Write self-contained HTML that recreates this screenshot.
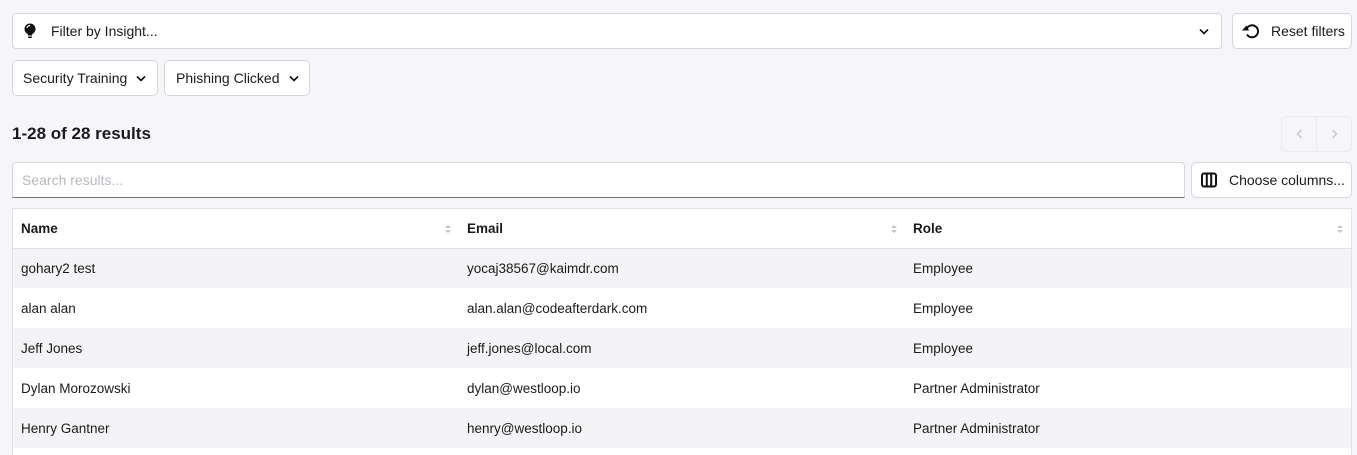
<!DOCTYPE html>
<html><head><meta charset="utf-8"><style>
*{box-sizing:border-box;margin:0;padding:0}
html,body{width:1357px;height:455px;overflow:hidden}
body{background:#f6f6fa;font-family:"Liberation Sans",sans-serif;font-size:14px;color:#1a1a1a;position:relative}
.abs{position:absolute}
.box{background:#fff;border:1px solid #d6d6db;border-radius:4px}
.btn{background:#fff;border:1px solid #d6d6db;border-radius:5px;display:flex;align-items:center}
table{border-collapse:collapse;width:100%}
td,th{height:40px;padding:0 8px;text-align:left;font-size:13.5px}
th{font-weight:bold;position:relative;height:39px}
tbody tr td{background:#fff}
tbody tr:nth-child(odd) td{background:#f4f4f7}
thead tr{border-bottom:1px solid #e2e2e6}
.sort{position:absolute;right:8px;top:15px;width:6px;height:10px}
</style></head><body>
<div class="abs box" style="left:12px;top:13px;width:1210px;height:36px;display:flex;align-items:center;padding-left:10px">
<svg width="14" height="16" viewBox="0 0 14 16"><circle cx="7" cy="6" r="5.5" fill="#111"/><path d="M4.5 10 L9.5 10 L9 12.5 L5 12.5Z" fill="#111"/><rect x="5" y="13.5" width="4" height="1.5" rx=".7" fill="#111"/><path d="M4 5 A3 3 0 0 1 7 2.5" stroke="#fff" stroke-width="1.2" fill="none"/></svg>
<span style="margin-left:14px">Filter by Insight...</span>
<svg class="abs" style="right:12px;top:14px" width="10" height="7" viewBox="0 0 10 7"><path d="M1 1.5 L5 5.5 L9 1.5" stroke="#111" stroke-width="1.6" fill="none"/></svg>
</div>
<div class="abs btn" style="left:1232px;top:13px;width:120px;height:36px;padding-left:8px">
<svg width="20" height="18" viewBox="0 0 20 18"><path d="M5.5 7 A6 6 0 1 1 6 12.5" stroke="#111" stroke-width="2" fill="none"/><path d="M1 8.5 L8 8.5 L5.5 3.5Z" fill="#111"/></svg>
<span style="margin-left:10px">Reset filters</span></div>
<div class="abs btn" style="left:12px;top:60px;width:146px;height:36px;padding-left:10px">Security Training<svg style="margin-left:9px" width="10" height="7" viewBox="0 0 10 7"><path d="M1 1.5 L5 5.5 L9 1.5" stroke="#111" stroke-width="1.6" fill="none"/></svg></div>
<div class="abs btn" style="left:164px;top:60px;width:146px;height:36px;padding-left:11px">Phishing Clicked<svg style="margin-left:9px" width="10" height="7" viewBox="0 0 10 7"><path d="M1 1.5 L5 5.5 L9 1.5" stroke="#111" stroke-width="1.6" fill="none"/></svg></div>
<div class="abs" style="left:12px;top:124px;font-size:17px;font-weight:bold">1-28 of 28 results</div>
<div class="abs" style="left:1281px;top:116px;width:71px;height:36px;border:1px solid #ececf0;border-radius:5px;display:flex">
<div style="flex:1;border-right:1px solid #ececf0;display:flex;align-items:center;justify-content:center"><svg width="7" height="10"><path d="M5.5 1 L1.5 5 L5.5 9" stroke="#c8c8cc" stroke-width="1.4" fill="none"/></svg></div>
<div style="flex:1;display:flex;align-items:center;justify-content:center"><svg width="7" height="10"><path d="M1.5 1 L5.5 5 L1.5 9" stroke="#c8c8cc" stroke-width="1.4" fill="none"/></svg></div></div>
<div class="abs" style="left:12px;top:162px;width:1173px;height:36px;background:#fff;border:1px solid #d6d6db;border-bottom:1.5px solid #777;border-radius:4px 4px 0 0;padding-left:9px;line-height:34px;color:#b8b8bd">Search results...</div>
<div class="abs btn" style="left:1191px;top:162px;width:161px;height:36px;padding-left:9px">
<svg width="16" height="16" viewBox="0 0 16 16"><rect x="1" y="1.5" width="14" height="13" rx="2" stroke="#111" stroke-width="2" fill="none"/><path d="M5.8 2 V14 M10.2 2 V14" stroke="#111" stroke-width="2"/></svg>
<span style="margin-left:12px">Choose columns...</span></div>
<div class="abs" style="left:12px;top:208px;width:1340px;height:260px;border:1px solid #e2e2e6;border-bottom:none;background:#fff">
<table><thead><tr><th style="width:446px">Name<svg class="sort" viewBox="0 0 6 10"><path d="M0 4 L3 1 L6 4Z M0 6 L3 9 L6 6Z" fill="#c4c4c8"/></svg></th><th style="width:446px">Email<svg class="sort" viewBox="0 0 6 10"><path d="M0 4 L3 1 L6 4Z M0 6 L3 9 L6 6Z" fill="#c4c4c8"/></svg></th><th>Role<svg class="sort" viewBox="0 0 6 10"><path d="M0 4 L3 1 L6 4Z M0 6 L3 9 L6 6Z" fill="#c4c4c8"/></svg></th></tr></thead>
<tbody>
<tr><td>gohary2 test</td><td>yocaj38567@kaimdr.com</td><td>Employee</td></tr>
<tr><td>alan alan</td><td>alan.alan@codeafterdark.com</td><td>Employee</td></tr>
<tr><td>Jeff Jones</td><td>jeff.jones@local.com</td><td>Employee</td></tr>
<tr><td>Dylan Morozowski</td><td>dylan@westloop.io</td><td>Partner Administrator</td></tr>
<tr><td>Henry Gantner</td><td>henry@westloop.io</td><td>Partner Administrator</td></tr>
</tbody></table></div>
</body></html>
